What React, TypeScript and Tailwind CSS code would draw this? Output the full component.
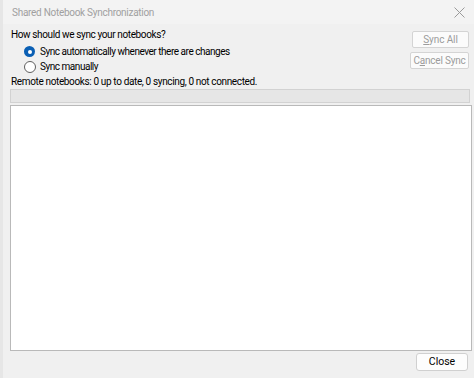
import React from "react";

const font = { fontFamily: 'Roboto, "Noto Sans", sans-serif' };

function Radio({ checked }: { checked: boolean }) {
  return checked ? (
    <span className="w-[11px] h-[11px] rounded-full bg-[#0a5fb4] flex items-center justify-center shrink-0">
      <span className="w-[4px] h-[4px] rounded-full bg-white" />
    </span>
  ) : (
    <span className="w-[12px] h-[12px] rounded-full border border-[#5f5f5f] bg-white shrink-0" />
  );
}

export default function App() {
  return (
    <div
      className="w-[474px] h-[378px] bg-[#f0f0f0] text-[#000] flex flex-col border-l-[3px] border-l-[#e6e6e6] overflow-hidden"
      style={font}
    >
      <div className="h-[24px] shrink-0 flex items-center justify-between pl-[9px] pr-[9px] text-[10px] tracking-[-0.28px] text-[#a0a0a0] bg-[#f3f3f3]">
        <span>Shared Notebook Synchronization</span>
        <svg width="11" height="11" viewBox="0 0 11 11">
          <path d="M0.5 0.5 L10.5 10.5 M10.5 0.5 L0.5 10.5" stroke="#9a9a9a" strokeWidth="1" />
        </svg>
      </div>
      <div className="flex-1 flex flex-col pl-[7px] pr-[2px]">
        <div className="flex h-[50px] shrink-0">
          <div className="flex-1 pt-[3px] pl-[1px]">
            <div className="h-[15px] flex items-center text-[10px] tracking-[-0.38px]">
              How should we sync your notebooks?
            </div>
            <div className="pl-[12px] flex flex-col mt-[2px]">
              <label className="h-[15px] flex items-center text-[10px] tracking-[-0.47px]">
                <span className="w-[13px] flex justify-center">
                  <Radio checked />
                </span>
                <span className="ml-[4px]">Sync automatically whenever there are changes</span>
              </label>
              <label className="h-[15px] flex items-center text-[10px] tracking-[-0.47px]">
                <span className="w-[13px] flex justify-center">
                  <Radio checked={false} />
                </span>
                <span className="ml-[4px]">Sync manually</span>
              </label>
            </div>
          </div>
          <div className="flex flex-col items-end pt-[7px] pr-[3px]">
            <button className="w-[57px] h-[17px] flex items-center justify-center border border-[#d4d4d4] bg-[#fbfbfb] rounded-[2px] text-[10px] tracking-[-0.1px] leading-none text-[#9c9c9c]">
              <span className="underline">S</span>ync All
            </button>
            <button className="mt-[4px] w-[59px] h-[17px] flex items-center justify-center border border-[#d4d4d4] bg-[#fbfbfb] rounded-[2px] text-[10px] tracking-[-0.2px] leading-none text-[#9c9c9c] whitespace-nowrap">
              C<span className="underline">a</span>ncel Sync
            </button>
          </div>
        </div>
        <div className="h-[15px] shrink-0 flex items-center pl-[1px] text-[10px] tracking-[-0.36px]">
          Remote notebooks: 0 up to date, 0 syncing, 0 not connected.
        </div>
        <div className="mr-[2px] h-[14px] shrink-0 bg-[#e6e6e6] border border-[#d2d2d2]" />
        <div className="mt-[2px] h-[246px] shrink-0 bg-white border border-[#b9b9b9]" />
        <div className="flex justify-end mt-[2px] pr-[4px]">
          <button className="w-[52px] h-[18px] flex items-center justify-center bg-[#fdfdfd] border border-[#d0d0d0] rounded-[3px] text-[10.5px] leading-none">
            Close
          </button>
        </div>
      </div>
    </div>
  );
}
